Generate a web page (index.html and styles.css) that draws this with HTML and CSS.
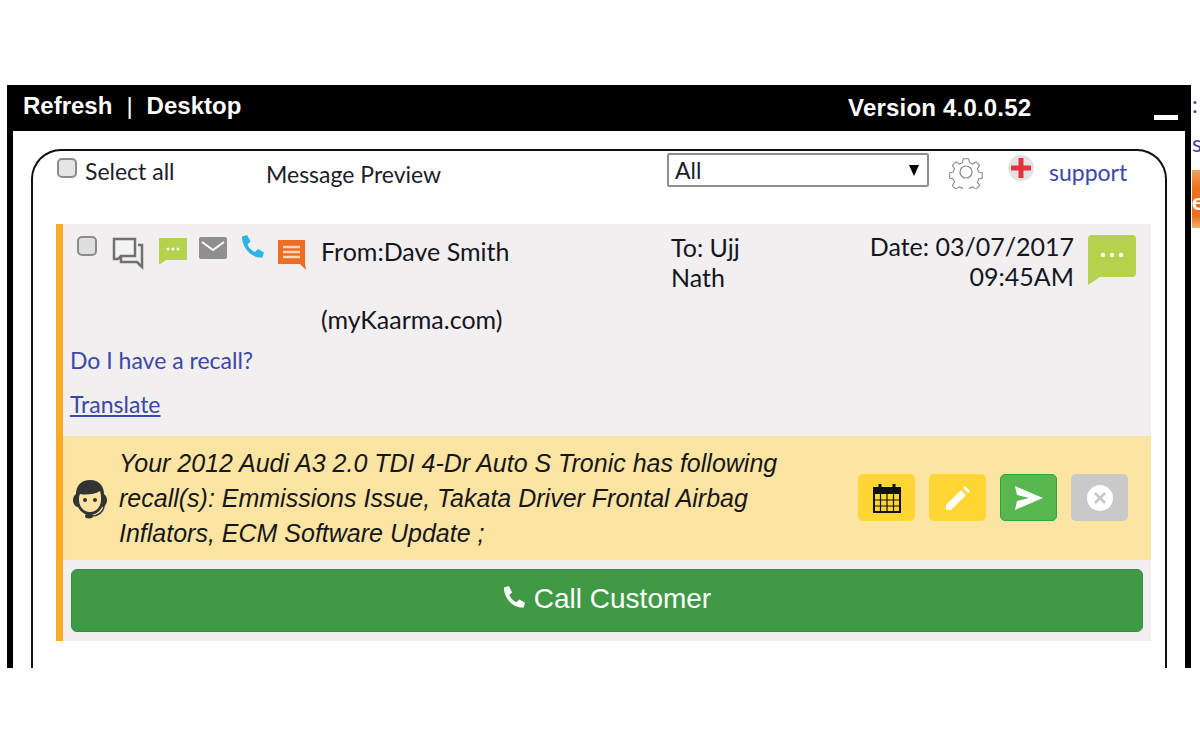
FILE: index.html
```html
<!DOCTYPE html>
<html lang="en">
<head>
<meta charset="utf-8">
<title>myKaarma</title>
<link rel="stylesheet" href="styles.css">
</head>
<body>
<div class="stage">
  <div class="frame">
    <header class="topbar">
      <div class="nav"><span>Refresh</span><span class="sep">|</span><span>Desktop</span></div>
      <div class="version">Version 4.0.0.52</div>
      <div class="minimize"></div>
    </header>
    <div class="inner">
      <section class="panel">
        <div class="toolbar">
          <label class="selectall"><span class="check"></span><span>Select all</span></label>
          <div class="preview">Message Preview</div>
          <div class="select"><span>All</span><span class="caret"></span></div>
          <svg class="gear" viewBox="0 0 34 34" width="34" height="34"><path d="M14 2h6l1 4.500 3.500 1.500 4-2.500 4 4-2.500 4 1.500 3.500 4 1v6l-4 1-1.500 3.500 2.500 4-4 4-4-2.500-3.500 1.500-1 4.500h-6l-1-4.500-3.500-1.500-4 2.500-4-4 2.500-4-1.500-3.500-4-1v-6l4-1 1.500-3.500-2.500-4 4-4 4 2.500 3.500-1.500z" transform="translate(2 2) scale(.88)" fill="none" stroke="#8a8a8a" stroke-width="1.200"/><circle cx="17" cy="17" r="6" fill="none" stroke="#8a8a8a" stroke-width="1.200"/></svg>
          <svg class="plus" viewBox="0 0 26 26" width="26" height="26"><circle cx="13" cy="13" r="13" fill="#e4e2e3"/><path d="M13 3v20M3 13h20" stroke="#e2333f" stroke-width="5"/></svg>
          <a class="support">support</a>
        </div>
        <article class="card">
          <div class="message">
            <div class="icons">
              <span class="check small"></span>
              <svg viewBox="0 0 34 34" width="34" height="34"><path d="M3 3h21v17H10l-3 3H3z" fill="#f3f3f3" stroke="#707070" stroke-width="2.500"/><path d="M27 9h4v22l-5-5H10v-5" fill="none" stroke="#707070" stroke-width="2.500"/></svg>
              <svg viewBox="0 0 28 28" width="28" height="28"><path d="M0 2h28v22H7l-7 5z" fill="#b5d24c"/><circle cx="9" cy="13" r="1.500" fill="#fff"/><circle cx="14" cy="13" r="1.500" fill="#fff"/><circle cx="19" cy="13" r="1.500" fill="#fff"/></svg>
              <svg viewBox="0 0 28 24" width="28" height="24"><rect width="28" height="22" rx="2" fill="#8f8f8f"/><path d="M3 5l11 8 11-8" fill="none" stroke="#fff" stroke-width="2"/></svg>
              <svg viewBox="0 0 24 24" width="24" height="24"><path d="M1 1.500l5-1.500 3.500 6.500-3 3c1.500 3.500 4 6 7.500 7.500l3-3 6 3.500-1.500 5c-11 1-21-10-20.500-21.500z" fill="#29b6e6"/></svg>
              <svg viewBox="0 0 28 30" width="28" height="30"><path d="M0 0h27v24l1 6-6-6H0z" fill="#ef6c25"/><path d="M5 7h17M5 12h17M5 17h17" stroke="#fbd6b8" stroke-width="2.500"/></svg>
            </div>
            <div class="from">From:Dave Smith<br><br>(myKaarma.com)</div>
            <div class="to">To: Ujj<br>Nath</div>
            <div class="date">Date: 03/07/2017<br>09:45AM</div>
            <svg class="bubble" viewBox="0 0 48 50" width="48" height="50"><path d="M4 0h40a4 4 0 0 1 4 4v34a4 4 0 0 1-4 4H12L0 50V4a4 4 0 0 1 4-4z" fill="#b5d24c"/><circle cx="15" cy="20" r="2.200" fill="#fff"/><circle cx="24" cy="20" r="2.200" fill="#fff"/><circle cx="33" cy="20" r="2.200" fill="#fff"/></svg>
          </div>
          <p class="body-text">Do I have a recall?</p>
          <p class="translate"><a>Translate</a></p>
          <div class="reply">
            <svg class="agent" viewBox="0 0 36 40" width="36" height="40"><path d="M18 1c9 0 14 6 14 14 3 2 4 7 2 10-1 2-2 3-4 3-2 4-6 8-12 8S8 32 6 28c-2 0-3-1-4-3-2-3-1-8 2-10C4 7 9 1 18 1z" fill="#333"/><path d="M8 15c5 1 14 1 20-3 1 3 1 6 1 9 0 7-5 12-11 12S7 28 7 21c0-2 0-4 1-6z" fill="#fde4a3"/><circle cx="13" cy="21" r="2" fill="#333"/><circle cx="23" cy="21" r="2" fill="#333"/><path d="M32 26c0 7-6 11-12 11" fill="none" stroke="#333" stroke-width="1.500"/><ellipse cx="17" cy="37" rx="4" ry="2.500" fill="#333"/></svg>
            <div class="reply-text">Your 2012 Audi A3 2.0 TDI 4-Dr Auto S Tronic has following recall(s): Emmissions Issue, Takata Driver Frontal Airbag Inflators, ECM Software Update ;</div>
            <div class="actions">
              <span class="action amber"><svg viewBox="0 0 28 30" width="28" height="30"><rect x="1" y="5" width="26" height="24" fill="#ffd634" stroke="#111" stroke-width="2"/><rect x="1" y="4" width="26" height="7" fill="#111"/><path d="M7 1v7M21 1v7" stroke="#111" stroke-width="3"/><path d="M1 17h26M1 23h26M7.500 11v18M14 11v18M20.500 11v18" stroke="#111" stroke-width="1.200"/></svg></span>
              <span class="action amber"><svg viewBox="0 0 26 26" width="26" height="26"><path d="M1 20L16 5l5 5L6 25H1z M18 3l2-2 5 5-2 2z" fill="#fff"/></svg></span>
              <span class="action green"><svg viewBox="0 0 28 24" width="28" height="24"><path d="M0 0l28 12L0 24l2-9 12-3-12-3z" fill="#fff"/></svg></span>
              <span class="action grey"><svg viewBox="0 0 26 26" width="26" height="26"><circle cx="13" cy="13" r="13" fill="#fff"/><path d="M8 8l10 10M18 8L8 18" stroke="#c6c6c6" stroke-width="2.500"/></svg></span>
            </div>
          </div>
          <div class="call-wrap">
            <button class="call"><svg viewBox="0 0 24 24" width="23" height="23"><path d="M1 1.500l5-1.500 3.500 6.500-3 3c1.500 3.500 4 6 7.500 7.500l3-3 6 3.500-1.500 5c-11 1-21-10-20.500-21.500z" fill="#fff"/></svg><span>Call Customer</span></button>
          </div>
        </article>
      </section>
    </div>
  </div>
  <aside class="stub">
    <div class="stub-colon">:</div>
    <div class="stub-s">s</div>
    <div class="stub-orange"><span class="stub-e">e</span></div>
  </aside>
</div>
</body>
</html>
```
FILE: styles.css
```css
* { box-sizing: border-box; }
html, body { margin: 0; background: #fff; }
body { width: 1200px; height: 740px; overflow: hidden; font-family: Lato, "Liberation Sans", sans-serif; color: #1c1c2a; }
.stage { display: flex; padding: 85px 0 0 7px; height: 668px; overflow: hidden; }
.frame { width: 1184px; height: 583px; background: #000; display: flex; flex-direction: column; flex: none; }
.topbar { height: 46px; flex: none; display: flex; color: #fff; font-family: "Liberation Sans", Arial, sans-serif; font-weight: 700; font-size: 24px; }
.nav { display: flex; gap: 14px; padding: 7px 0 0 16px; width: 841px; white-space: nowrap; }
.sep { font-weight: 400; color: #fff; }
.version { padding-top: 9px; width: 306px; white-space: nowrap; letter-spacing: .2px; }
.minimize { width: 24px; height: 5px; background: #fff; margin-top: 30px; }
.inner { flex: 1; background: #fff; margin: 0 6px; padding: 18px 18px 0; overflow: hidden; }
.panel { border: 2px solid #111; border-bottom: 0; border-radius: 30px 30px 0 0; height: 560px; padding: 0 14px 0 23px; }
.toolbar { display: flex; align-items: flex-start; height: 73px; font-size: 23px; }
.selectall { display: flex; gap: 8px; width: 209px; margin-left: 1px; padding-top: 7px; }
.check { width: 20px; height: 20px; border: 2px solid #8b8b8b; border-radius: 5px; background: #e4e4e4; flex: none; margin-top: 0; }
.selectall > span:last-child { margin-top: -1px; }
.preview { width: 401px; padding-top: 9px; white-space: nowrap; }
.select { width: 262px; height: 34px; margin-top: 2px; border: 2px solid #8e8e8e; border-radius: 2px; padding: 1px 8px 0 6px; display: flex; justify-content: space-between; align-items: center; line-height: 1; }
.caret { width: 0; height: 0; border: 5px solid transparent; border-top: 11px solid #000; border-bottom: 0; }
.gear { margin: 4px 0 0 20px; flex: none; }
.plus { margin: 4px 0 0 25px; flex: none; }
.support { margin: 7px 0 0 15px; color: #3a47a8; }
.card { margin-left: 0; background: #f1eff0; border-left: 7px solid #fba927; height: 417px; width: 1095px; }
.message { display: flex; height: 116px; font-size: 25px; line-height: 32px; color: #15151f; }
.icons { display: flex; align-items: flex-start; gap: 0; width: 258px; padding: 10px 0 0 14px; flex: none; }
.icons svg { flex: none; }
.check.small { margin: 2px 14px 0 0; background: #e0dfdf; }
.icons svg:nth-child(2) { margin: 2px 14px 0 0; }
.icons svg:nth-child(3) { margin: 2px 12px 0 0; }
.icons svg:nth-child(4) { margin: 3px 14px 0 0; }
.icons svg:nth-child(5) { margin: 1px 13px 0 0; }
.icons svg:nth-child(6) { margin: 6px 0 0 0; }
.from { width: 350px; padding-top: 10px; line-height: 34px; flex: none; }
.to { width: 150px; padding-top: 8px; line-height: 30px; flex: none; }
.date { width: 253px; text-align: right; padding-top: 7px; line-height: 30px; flex: none; }
.bubble { margin: 11px 0 0 14px; flex: none; }
.body-text { margin: 0; padding: 5px 0 0 7px; height: 49px; font-size: 23px; line-height: 30px; color: #3a47a8; }
.translate { margin: 0; padding: 0 0 0 7px; height: 47px; font-size: 23px; line-height: 30px; }
.translate a { color: #3a47a8; text-decoration: underline; }
.reply { height: 124px; background: #fce4a2; display: flex; align-items: center; padding-left: 9px; }
.agent { flex: none; margin-top: 2px; }
.reply-text { width: 694px; margin-left: 11px; flex: none; font-family: "Liberation Sans", Arial, sans-serif; font-style: italic; font-size: 25px; line-height: 35px; color: #16161c; }
.actions { display: flex; gap: 14px; margin-left: 45px; margin-top: -1px; }
.action { width: 57px; height: 47px; border-radius: 5px; display: flex; align-items: center; justify-content: center; }
.amber { background: #ffd634; }
.green { background: #58b84f; border: 1px solid #2ea44a; }
.grey { background: #c9c9c9; }
.call-wrap { padding: 9px 8px; }
.call { width: 100%; height: 63px; background: #3f9945; border: 1px solid #2f8f42; border-radius: 6px; color: #fff; display: flex; align-items: center; justify-content: center; gap: 8px; font-family: "Liberation Sans", Arial, sans-serif; font-size: 28px; padding: 0 0 3px; }
.call svg { flex: none; margin-top: -3px; }
.stub { flex: 1; font-size: 23px; color: #3a47a8; padding-left: 1px; overflow: hidden; }
.stub-colon { height: 41px; padding-top: 6px; line-height: 26px; color: #5a2fa0; }
.stub-s { height: 44px; line-height: 34px; }
.stub-orange { height: 58px; background: linear-gradient(#f3a35b, #ee6f1c 30%, #ee6f1c 80%, #f6b279); }
.stub-e { display: block; color: #fff; font-weight: 700; line-height: 62px; }
```
